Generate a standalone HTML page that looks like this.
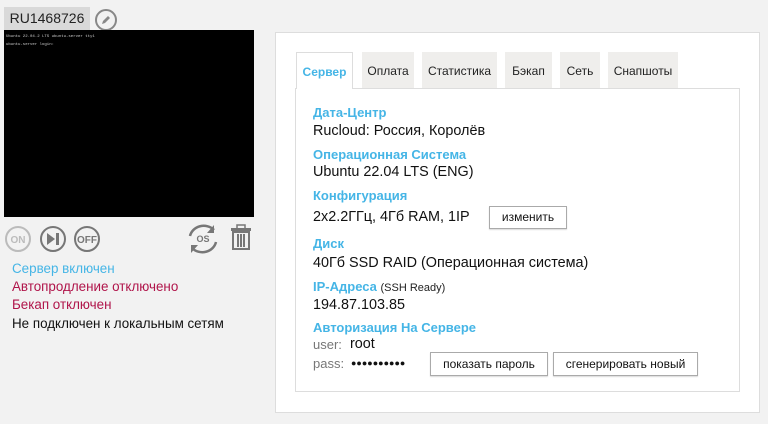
<!DOCTYPE html>
<html><head><meta charset="utf-8"><style>
*{margin:0;padding:0;box-sizing:border-box}
body{width:768px;height:424px;background:#f2f2f2;font-family:"Liberation Sans","DejaVu Sans",sans-serif;position:relative;overflow:hidden;color:#111}
.a{position:absolute;white-space:nowrap}
.lbl{color:#45b5e6;font-weight:bold;font-size:13px}
.val{font-size:14.4px;color:#111}
.btn{position:absolute;background:#fff;border:1px solid #aaa;box-shadow:0 1px 1px rgba(0,0,0,.15);font-size:12px;text-align:center;color:#111}
.tab{position:absolute;top:52px;height:36px;background:#efeeec;font-size:12px;text-align:center;line-height:38px;color:#222}
.st{font-size:13.4px}
</style></head><body>
<div class="a" style="left:4px;top:7px;width:86px;height:23px;background:#d9d9d9;font-size:14px;text-align:center;line-height:23px;color:#222">RU1468726</div>
<svg class="a" style="left:94px;top:8px" width="24" height="24" viewBox="0 0 24 24"><circle cx="12" cy="12" r="10" fill="none" stroke="#888" stroke-width="2"/><path d="M8 16l1-3 5-5 2 2-5 5z" fill="#888"/></svg>
<div class="a" style="left:4px;top:30px;width:250px;height:187px;background:#000"></div>
<div class="a" style="left:6px;top:33px;font-size:4px;color:#ccc;font-family:'Liberation Mono',monospace;line-height:8px">Ubuntu 22.04.2 LTS ubuntu-server tty1<br>ubuntu-server login:</div>
<svg class="a" style="left:0;top:222px" width="260" height="34">
<circle cx="18" cy="17" r="12" fill="none" stroke="#bbb" stroke-width="2"/>
<text x="18" y="21" font-size="10" font-weight="bold" fill="#bbb" text-anchor="middle" font-family="Liberation Sans">ON</text>
<circle cx="53" cy="17" r="12" fill="none" stroke="#777" stroke-width="2"/>
<path d="M47 11v12l8-6z" fill="#777"/><rect x="56" y="11" width="3" height="12" fill="#777"/>
<circle cx="87" cy="17" r="12" fill="none" stroke="#777" stroke-width="2"/>
<text x="87" y="21" font-size="10" font-weight="bold" fill="#777" text-anchor="middle" font-family="Liberation Sans">OFF</text>
<path d="M190 14a14 13 0 0 1 24-6" fill="none" stroke="#777" stroke-width="2.5"/><path d="M214 3v8h-7z" fill="#777"/>
<path d="M216 20a14 13 0 0 1-24 6" fill="none" stroke="#777" stroke-width="2.5"/><path d="M191 31v-8h7z" fill="#777"/>
<text x="203" y="20" font-size="9" font-weight="bold" fill="#777" text-anchor="middle" font-family="Liberation Sans">OS</text>
<rect x="231" y="6" width="20" height="3" fill="#777"/><rect x="237" y="3" width="8" height="4" fill="none" stroke="#777" stroke-width="1.5"/>
<rect x="233" y="10" width="16" height="17" fill="none" stroke="#777" stroke-width="2"/>
<rect x="237" y="12" width="2" height="13" fill="#777"/><rect x="240" y="12" width="2" height="13" fill="#777"/><rect x="243" y="12" width="2" height="13" fill="#777"/>
</svg>
<div class="a st" style="left:12px;top:261px;color:#45b5e6">Сервер включен</div>
<div class="a st" style="left:12px;top:279px;color:#b0144a">Автопродление отключено</div>
<div class="a st" style="left:12px;top:297px;color:#b0144a">Бекап отключен</div>
<div class="a st" style="left:12px;top:316px;color:#111">Не подключен к локальным сетям</div>

<div class="a" style="left:275px;top:32px;width:485px;height:381px;background:#fff;border:1px solid #ddd"></div>
<div class="a" style="left:295px;top:88px;width:445px;height:304px;border:1px solid #ddd;background:#fff"></div>
<div class="tab" style="left:296px;width:57px;height:37px;background:#fff;border:1px solid #ddd;border-bottom:none;color:#45b5e6;font-weight:bold">Сервер</div>
<div class="tab" style="left:362px;width:52px">Оплата</div>
<div class="tab" style="left:422px;width:75px">Статистика</div>
<div class="tab" style="left:505px;width:47px">Бэкап</div>
<div class="tab" style="left:560px;width:40px">Сеть</div>
<div class="tab" style="left:608px;width:70px">Снапшоты</div>

<div class="a lbl" style="left:313px;top:105px">Дата-Центр</div>
<div class="a val" style="left:313px;top:123px">Rucloud: Россия, Королёв</div>
<div class="a lbl" style="left:313px;top:147px">Операционная Система</div>
<div class="a val" style="left:313px;top:164px">Ubuntu 22.04 LTS (ENG)</div>
<div class="a lbl" style="left:313px;top:188px">Конфигурация</div>
<div class="a val" style="left:313px;top:209px">2x2.2ГГц, 4Гб RAM, 1IP</div>
<div class="btn" style="left:489px;top:206px;width:78px;height:23px;line-height:21px">изменить</div>
<div class="a lbl" style="left:313px;top:236px">Диск</div>
<div class="a val" style="left:313px;top:255px">40Гб SSD RAID (Операционная система)</div>
<div class="a lbl" style="left:313px;top:279px">IP-Адреса <span style="font-weight:normal;font-size:11px;color:#222">(SSH Ready)</span></div>
<div class="a val" style="left:313px;top:297px">194.87.103.85</div>
<div class="a lbl" style="left:313px;top:320px">Авторизация На Сервере</div>
<div class="a" style="left:313px;top:337px;font-size:13px;color:#777">user:</div>
<div class="a val" style="left:350px;top:336px">root</div>
<div class="a" style="left:313px;top:356px;font-size:13px;color:#777">pass:</div>
<div class="a" style="left:351px;top:358px;font-size:9px;color:#111;letter-spacing:0px">●●●●●●●●●●</div>
<div class="btn" style="left:430px;top:352px;width:118px;height:24px;line-height:22px">показать пароль</div>
<div class="btn" style="left:553px;top:352px;width:145px;height:24px;line-height:22px">сгенерировать новый</div>
</body></html>
